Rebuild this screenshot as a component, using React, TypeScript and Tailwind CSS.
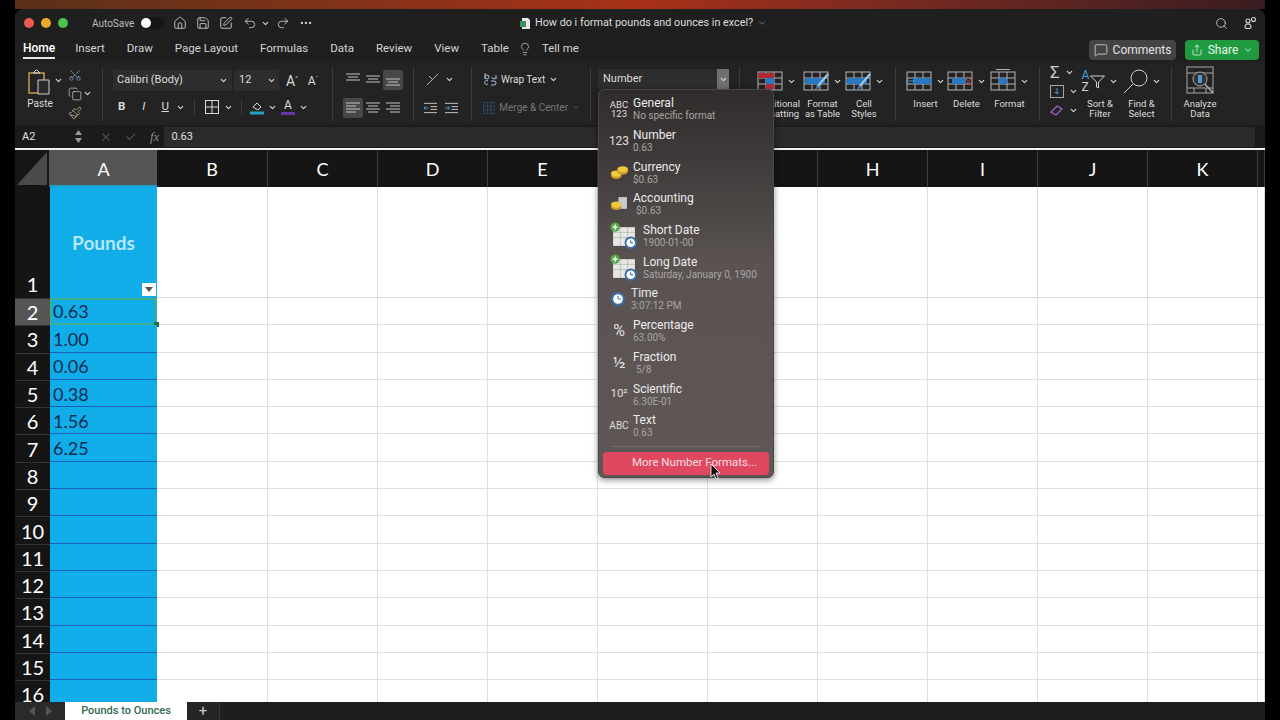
import type { ReactNode } from "react";
import { Home, Save, SquarePen, Undo2, Redo2, Ellipsis, Lightbulb, Search, Scissors, Copy, Paintbrush, ChevronDown, MessageSquare, Share, X, Check } from "lucide-react";

const ui = "font-['Roboto','Liberation_Sans',sans-serif]";
const sheet = "font-['Lato','Liberation_Sans',sans-serif]";

function Chev({ className = "" }: { className?: string }) {
  return <ChevronDown size={9} strokeWidth={3} className={`shrink-0 text-[#d8d8d8] ${className}`} />;
}

function Sep() {
  return <div className="mx-[10px] h-[54px] w-px shrink-0 bg-[#3a3a3a]" />;
}

function Lines({ kind }: { kind: "top" | "mid" | "bot" | "left" | "center" | "right" }) {
  const rows: Record<string, [number, number][]> = {
    top: [[1, 14], [4, 10], [7, 14]],
    mid: [[3, 14], [6, 10], [9, 14]],
    bot: [[6, 14], [9, 10], [12, 14]],
    left: [[2, 14], [5, 10], [8, 14], [11, 10]],
    center: [[2, 14], [5, 10], [8, 14], [11, 10]],
    right: [[2, 14], [5, 10], [8, 14], [11, 10]],
  };
  return (
    <svg width="16" height="14" viewBox="0 0 16 14" stroke="#c4c4c4" strokeWidth="1">
      {rows[kind].map(([y, w]) => {
        const x = kind === "right" ? 15 - w : kind === "left" ? 1 : 8 - w / 2;
        return <line key={y} x1={x} x2={x + w} y1={y} y2={y} />;
      })}
    </svg>
  );
}

function TableIcon({ children }: { children?: ReactNode }) {
  return (
    <svg width="27" height="24" viewBox="0 0 27 24" fill="none" stroke="#b4b4b4" strokeWidth="1">
      <rect x="1" y="3" width="24" height="18" />
      <path d="M1 9h24M1 15h24M9 3v18M17 3v18" />
      {children}
    </svg>
  );
}

function RibbonButton({ icon, label, width }: { icon: ReactNode; label: ReactNode; width: string }) {
  return (
    <div className={`flex shrink-0 flex-col items-center ${width}`}>
      <div className="flex h-[30px] items-center gap-[3px]">
        {icon}
        <Chev />
      </div>
      <div className="mt-[3px] whitespace-nowrap text-center text-[9.5px] leading-[10px] text-[#dcdcdc]">{label}</div>
    </div>
  );
}

function TitleBar() {
  return (
    <div className="relative flex h-[28px] items-center rounded-t-[8px] bg-[#1f1f1f] pl-[9px] pr-[8px] text-[#d6d6d6]">
      <span className="h-[10px] w-[10px] rounded-full bg-[#ee5a52]" />
      <span className="ml-[7px] h-[10px] w-[10px] rounded-full bg-[#e9a92a]" />
      <span className="ml-[7px] h-[10px] w-[10px] rounded-full bg-[#4cc04a]" />
      <span className="ml-[24px] w-[43px] text-[10px] text-[#bcbcbc]">AutoSave</span>
      <span className="relative ml-[6px] h-[12px] w-[24px] rounded-full bg-[#161616]">
        <span className="absolute left-0 top-[1px] h-[10px] w-[10px] rounded-full bg-white" />
      </span>
      <Home size={14} strokeWidth={1.4} className="ml-[8px]" />
      <Save size={14} strokeWidth={1.4} className="ml-[9px]" />
      <SquarePen size={14} strokeWidth={1.5} className="ml-[9px]" />
      <Undo2 size={14} strokeWidth={1.4} className="ml-[10px]" />
      <Chev className="ml-[4px]" />
      <Redo2 size={14} strokeWidth={1.4} className="ml-[6px]" />
      <Ellipsis size={14} className="ml-[9px]" />
      <div className="absolute left-[504px] top-0 flex h-full items-center gap-[4px]">
        <svg width="12" height="13" viewBox="0 0 12 13">
          <path d="M3 1h6l2 2v9H3z" fill="#e8e8e8" />
          <rect x="1" y="4" width="6" height="6" fill="#3f8f63" />
        </svg>
        <span className="text-[10.8px] text-[#dedede]">How do i format pounds and ounces in excel?</span>
        <ChevronDown size={10} className="text-[#8a8a8a]" />
      </div>
      <Search size={13} strokeWidth={1.5} className="ml-auto mr-[15px]" />
      <svg width="14" height="14" viewBox="0 0 14 14" fill="none" stroke="#d6d6d6" strokeWidth="1.1">
        <circle cx="5" cy="5" r="2" />
        <circle cx="10.500" cy="3.500" r="2" />
        <path d="M2 11c0-2 1.500-3 3-3s3 1 3 3-6 2-6 0z" />
      </svg>
    </div>
  );
}

function Tabs() {
  const tabs = ["Insert", "Draw", "Page Layout", "Formulas", "Data", "Review", "View", "Table"];
  return (
    <div className="flex h-[25px] items-start bg-[#1f1f1f] pl-[8px] pr-[6px] text-[11.5px] text-[#d4d4d4]">
      <div className="mr-[20px] flex h-[22px] items-center border-b-2 border-[#e6e6e6] pt-[2px] text-[12px] font-medium text-white">Home</div>
      <div className="flex h-[22px] items-center gap-[22px] pt-[1px]">
        {tabs.map((t) => (
          <span key={t}>{t}</span>
        ))}
        <span className="flex items-center gap-[10px]">
          <Lightbulb size={14} strokeWidth={1.2} className="-ml-[13px]" />
          Tell me
        </span>
      </div>
      <div className="ml-auto mt-[3px] flex h-[20px] w-[87px] items-center justify-center gap-[5px] rounded-[4px] bg-[#444444] text-[12px] text-[#e2e2e2]">
        <MessageSquare size={14} strokeWidth={1.3} />
        Comments
      </div>
      <div className="ml-[9px] mt-[3px] flex h-[20px] w-[74px] items-center justify-center gap-[5px] rounded-[4px] bg-[#1f9a40] text-[12px] text-[#eaf7ec]">
        <Share size={12} strokeWidth={1.5} />
        Share
        <ChevronDown size={10} />
      </div>
    </div>
  );
}

function Ribbon() {
  return (
    <div className="flex h-[63px] items-center bg-[#232323] pl-[11px] text-[#dcdcdc]">
      {/* clipboard */}
      <div className="flex w-[66px] shrink-0 items-start">
        <div className="flex w-[30px] flex-col items-center">
          <svg width="26" height="28" viewBox="0 0 26 28" fill="none">
            <path d="M2 5h15v20H2z" stroke="#c89a4a" strokeWidth="1.5" />
            <path d="M6 5l3-3h1l3 3z" stroke="#cfcfcf" />
            <path d="M11 12h11v14H11z" fill="#2a2a2a" stroke="#d0d0d0" />
          </svg>
          <span className="mt-[2px] text-[10px] leading-[12px]">Paste</span>
        </div>
        <Chev className="mt-[8px]" />
        <div className="ml-[5px] flex flex-col items-start gap-[5px]">
          <Scissors size={14} strokeWidth={1.1} className="rotate-[-90deg] text-[#8ab2d8]" />
          <div className="flex items-center gap-[1px]">
            <Copy size={14} strokeWidth={1.1} />
            <Chev />
          </div>
          <Paintbrush size={14} strokeWidth={1.2} className="text-[#d9c9a0]" />
        </div>
      </div>
      <Sep />
      {/* font */}
      <div className="flex w-[209px] shrink-0 flex-col gap-[6px]">
        <div className="flex items-center">
          <div className="flex h-[21px] w-[119px] items-center justify-between bg-[#2d2d2d] pl-[4px] pr-[4px] text-[11px]">
            Calibri (Body)
            <Chev />
          </div>
          <div className="ml-[2px] flex h-[21px] w-[45px] items-center justify-between bg-[#2d2d2d] pl-[5px] pr-[3px] text-[11px]">
            12
            <Chev />
          </div>
          <span className="ml-[7px] text-[14px] leading-[14px]">A</span>
          <span className="-mt-[6px] text-[6px] leading-[6px]">^</span>
          <span className="ml-[10px] text-[12px] leading-[12px]">A</span>
          <span className="-mt-[6px] text-[6px] leading-[6px]">ˇ</span>
        </div>
        <div className="flex h-[20px] items-center pl-[5px] text-[11.5px]">
          <span className="font-bold">B</span>
          <span className="ml-[17px] italic">I</span>
          <span className="ml-[16px] underline">U</span>
          <Chev className="ml-[7px]" />
          <div className="ml-[9px] mr-[10px] h-[16px] w-px bg-[#3a3a3a]" />
          <svg width="14" height="14" viewBox="0 0 14 14" fill="none" stroke="#d8d8d8">
            <rect x="0.500" y="0.500" width="13" height="13" />
            <path d="M7 0v14M0 7h14" />
          </svg>
          <Chev className="ml-[5px]" />
          <div className="ml-[8px] mr-[8px] h-[16px] w-px bg-[#3a3a3a]" />
          <svg width="15" height="15" viewBox="0 0 15 15" fill="none">
            <path d="M3 7l4-4 4 4-3 3z" stroke="#d8d8d8" />
            <rect x="0" y="11.500" width="14" height="3" fill="#27a0c4" />
          </svg>
          <Chev className="ml-[3px]" />
          <span className="ml-[4px] flex h-[16px] w-[14px] flex-col items-center text-[12px] leading-[12px]">
            A
            <span className="mt-[1px] h-[3px] w-[14px] bg-[#6a35a8]" />
          </span>
          <Chev className="ml-[4px]" />
        </div>
      </div>
      <Sep />
      {/* alignment */}
      <div className="grid w-[60px] shrink-0 grid-cols-3 gap-y-[8px]">
        <div className="flex h-[20px] items-center justify-center"><Lines kind="top" /></div>
        <div className="flex h-[20px] items-center justify-center"><Lines kind="mid" /></div>
        <div className="flex h-[20px] items-center justify-center rounded-[2px] bg-[#474747]"><Lines kind="bot" /></div>
        <div className="flex h-[20px] items-center justify-center rounded-[2px] bg-[#474747]"><Lines kind="left" /></div>
        <div className="flex h-[20px] items-center justify-center"><Lines kind="center" /></div>
        <div className="flex h-[20px] items-center justify-center"><Lines kind="right" /></div>
      </div>
      <Sep />
      <div className="flex h-[48px] w-[37px] shrink-0 flex-col justify-between">
        <div className="flex h-[20px] items-center gap-[3px] pl-[1px]">
          <svg width="17" height="15" viewBox="0 0 17 15" fill="none" stroke="#9dbbd8">
            <path d="M2 13L13 2M4 4l4 4" />
          </svg>
          <Chev />
        </div>
        <div className="flex h-[20px] items-center gap-[8px]">
          <svg width="13" height="12" viewBox="0 0 14 12" fill="none" stroke="#cfcfcf">
            <path d="M0 1h14M7 4.500h7M7 7.500h7M0 11h14" />
            <path d="M5 6H0m2-2L0 6l2 2" stroke="#4b9ad6" />
          </svg>
          <svg width="13" height="12" viewBox="0 0 14 12" fill="none" stroke="#cfcfcf">
            <path d="M0 1h14M7 4.500h7M7 7.500h7M0 11h14" />
            <path d="M0 6h5M3 4l2 2-2 2" stroke="#4b9ad6" />
          </svg>
        </div>
      </div>
      <Sep />
      {/* wrap and merge */}
      <div className="flex h-[48px] w-[98px] shrink-0 flex-col justify-between whitespace-nowrap pl-[1px] text-[10px]">
        <div className="flex h-[20px] items-center gap-[4px]">
          <svg width="14" height="15" viewBox="0 0 14 15" fill="none" stroke="#a8c4de">
            <path d="M2 1v6M2 5a2 2 0 1 0 4 0 2 2 0 1 0-4 0M9 5a2 2 0 1 0 4 0M13 3v4M5 12a2 2 0 1 1 0-3M8 13h3a2 2 0 0 0 0-4H8" />
          </svg>
          Wrap Text
          <Chev />
        </div>
        <div className="flex h-[20px] items-center gap-[4px] text-[#777777]">
          <svg width="14" height="14" viewBox="0 0 14 14" fill="none" stroke="#2f4a66">
            <rect x="0.500" y="0.500" width="13" height="13" />
            <path d="M0 5h14M0 9h14M5 0v14M9 0v14" />
          </svg>
          Merge &amp; Center
          <ChevronDown size={9} />
        </div>
      </div>
      <Sep />
      {/* number */}
      <div className="-ml-[3px] w-[131px] shrink-0 self-start pt-[7px]">
        <div className="flex h-[20px] items-center justify-between bg-[#2d2d2d] pl-[5px] text-[11px]">
          Number
          <div className="flex h-[20px] w-[12px] items-center justify-center bg-[#707070]">
            <Chev />
          </div>
        </div>
      </div>
      <Sep />
      {/* styles */}
      <div className="flex w-[135px] shrink-0 self-start pt-[4px]">
        <RibbonButton
          width="w-[52px]"
          icon={
            <TableIcon>
              <rect x="9" y="4" width="8" height="5" fill="#b22a38" stroke="none" />
              <rect x="9" y="15" width="8" height="5" fill="#b22a38" stroke="none" />
              <rect x="1" y="4" width="8" height="5" fill="#b22a38" stroke="none" />
              <rect x="9" y="9" width="8" height="6" fill="#2878c4" stroke="none" />
            </TableIcon>
          }
          label={<>Conditional<br />Formatting</>}
        />
        <RibbonButton
          width="w-[41px]"
          icon={
            <TableIcon>
              <rect x="2" y="9" width="20" height="6" fill="#2878c4" stroke="none" />
              <path d="M25 5L14 18" stroke="#9cc8ea" strokeWidth="2" />
              <path d="M15 16l-4 5 5-2z" fill="#2878c4" stroke="none" />
            </TableIcon>
          }
          label={<>Format<br />as Table</>}
        />
        <RibbonButton
          width="w-[42px]"
          icon={
            <TableIcon>
              <rect x="2" y="9" width="20" height="6" fill="#2878c4" stroke="none" />
              <path d="M25 5L14 18" stroke="#9cc8ea" strokeWidth="2" />
              <path d="M15 16l-4 5 5-2z" fill="#2878c4" stroke="none" />
            </TableIcon>
          }
          label={<>Cell<br />Styles</>}
        />
      </div>
      <Sep />
      {/* cells */}
      <div className="flex w-[123px] shrink-0 items-start self-start pt-[4px]">
        <RibbonButton
          width="w-[39px]"
          icon={
            <TableIcon>
              <rect x="7" y="9" width="18" height="6" fill="#2878c4" stroke="none" />
              <path d="M8 12H0m3-3l-3 3 3 3" stroke="#4b9ad6" />
            </TableIcon>
          }
          label="Insert"
        />
        <RibbonButton
          width="w-[43px]"
          icon={
            <TableIcon>
              <rect x="5" y="9" width="14" height="6" fill="#2878c4" stroke="none" />
              <path d="M17 8l9 9m0-9l-9 9" stroke="#c8403c" />
            </TableIcon>
          }
          label="Delete"
        />
        <RibbonButton
          width="w-[43px]"
          icon={
            <TableIcon>
              <rect x="9" y="9" width="8" height="6" fill="#2878c4" stroke="none" />
              <path d="M6 0.500h14" />
            </TableIcon>
          }
          label="Format"
        />
      </div>
      <Sep />
      {/* editing */}
      <div className="flex w-[111px] shrink-0 items-start self-start pt-[3px]">
        <div className="flex w-[29px] shrink-0 flex-col gap-[6px] text-[#cfcfcf]">
          <div className="flex items-center gap-[5px] text-[17px] leading-[14px]">Σ<Chev /></div>
          <div className="flex items-center gap-[5px]">
            <svg width="14" height="13" viewBox="0 0 14 13" fill="none" stroke="#9aa9b8">
              <rect x="0.500" y="0.500" width="13" height="12" />
              <path d="M7 3v6M5 7l2 2 2-2" stroke="#4b9ad6" />
            </svg>
            <Chev />
          </div>
          <div className="flex items-center gap-[5px]">
            <svg width="14" height="13" viewBox="0 0 14 13" fill="none" stroke="#a060c8" strokeWidth="1.3">
              <path d="M1 8l6-6 5 3-6 6z" />
            </svg>
            <Chev />
          </div>
        </div>
        <div className="pt-[1px]">
          <RibbonButton
            width="w-[42px]"
            icon={
              <span className="flex items-center">
                <span className="flex flex-col text-[12px] leading-[12px]">
                  <span className="text-[#4b9ad6]">A</span>
                  <span className="text-[#cfcfcf]">Z</span>
                </span>
                <svg width="17" height="15" viewBox="0 0 16 15" fill="none" stroke="#cfcfcf">
                  <path d="M1 2h14L9 8v6l-2-1V8z" />
                </svg>
              </span>
            }
            label={<>Sort &amp;<br />Filter</>}
          />
        </div>
        <div className="pt-[1px]">
          <RibbonButton
            width="w-[41px]"
            icon={
              <svg width="26" height="26" viewBox="0 0 26 26" fill="none" stroke="#cfcfcf">
                <circle cx="16" cy="10" r="8" />
                <path d="M10 16l-9 9" />
              </svg>
            }
            label={<>Find &amp;<br />Select</>}
          />
        </div>
      </div>
      <Sep />
      <div className="flex w-[36px] shrink-0 flex-col items-center self-start pt-[4px]">
        <svg width="29" height="30" viewBox="0 0 29 30" fill="none" stroke="#a8a8a8">
          <rect x="1" y="1" width="26" height="26" />
          <path d="M1 7h26M1 22h26M8 22v5M20 22v5" />
          <circle cx="14" cy="13" r="7" fill="#333333" />
          <rect x="12" y="9" width="4" height="8" fill="#4b9ad6" stroke="none" />
          <path d="M19 18l8 9" strokeWidth="1.500" />
        </svg>
        <div className="mt-[3px] whitespace-nowrap text-center text-[9.5px] leading-[10px]">Analyze<br />Data</div>
      </div>
    </div>
  );
}

function FormulaBar() {
  return (
    <div className="flex h-[25px] items-center border-b-[2px] border-[#f0f0f0] bg-[#1b1b1b] pl-[7px] pr-[10px] text-[11px] text-[#e0e0e0]">
      <span className="w-[48px] pt-[1px]">A2</span>
      <svg width="7" height="13" viewBox="0 0 7 13" fill="#9a9a9a" className="ml-[5px]">
        <path d="M3.500 0L7 5H0zM3.500 13L0 8h7z" />
      </svg>
      <X size={12} strokeWidth={2.4} className="ml-[18px] text-[#4c4c4c]" />
      <Check size={12} strokeWidth={2.4} className="ml-[13px] text-[#4c4c4c]" />
      <span className="ml-[13px] font-['Liberation_Serif',serif] text-[13px] italic text-[#8a8a8a]">fx</span>
      <div className="ml-[5px] flex h-[20px] flex-1 items-center bg-[#2a2a2a] pl-[7px] pt-[1px]">0.63</div>
    </div>
  );
}

// F and G sit behind the open menu, so their letters are never seen
const columns = ["B", "C", "D", "E", "", "", "H", "I", "J", "K", ""];
const values: Record<number, string> = { 2: "0.63", 3: "1.00", 4: "0.06", 5: "0.38", 6: "1.56", 7: "6.25" };
const rowNumbers = Array.from({ length: 15 }, (_, i) => i + 2);

function Sheet() {
  return (
    <div className={`min-h-0 flex-1 overflow-hidden bg-white ${sheet}`}>
      <div className="grid grid-cols-[35px_107px_111px_repeat(9,110px)_7px] grid-rows-[37px_111px_repeat(15,27.3px)]">
        <div className="flex items-end justify-end border-r border-[#555555] bg-[#161616] p-[2px]">
          <div className="h-[33px] w-[33px] bg-[#4a4a4a] [clip-path:polygon(100%_0,100%_100%,0_100%)]" />
        </div>
        <div className="flex items-center justify-center border-b-2 border-[#1ba0c8] bg-[#555555] pt-[3px] text-[18px] text-white">A</div>
        {columns.map((c, i) => (
          <div key={i} className="flex items-center justify-center border-r border-[#3c3c3c] bg-[#151515] pt-[2px] text-[18px] text-white">
            {c}
          </div>
        ))}

        <div className="flex items-end justify-center bg-[#151515] pb-[1px] text-[20px] leading-[26px] text-white">1</div>
        <div className="relative flex items-center justify-center bg-[#11ade8] pt-[1px] text-[19px] font-bold text-[#b6e6f8]">
          Pounds
          <div className="absolute bottom-[2px] right-[1px] flex h-[13px] w-[14px] items-center justify-center bg-white">
            <span className="h-0 w-0 border-x-[4px] border-t-[5px] border-x-transparent border-t-[#555555]" />
          </div>
        </div>
        {columns.map((c, i) => (
          <div key={i} className="border-b border-r border-[#dcdcdc]" />
        ))}

        {rowNumbers.map((n) => (
          <div key={n} className="contents">
            <div className={`flex items-center justify-center border-t border-[#333333] text-[20px] text-white ${n === 2 ? "bg-[#555555]" : "bg-[#151515]"}`}>
              {n}
            </div>
            <div
              className={`relative flex items-center bg-[#11ade8] text-[18px] text-[#0c2c52] ${
                n === 2 ? "border-2 border-[#3fae8c] pl-[1px]" : "border-b border-[#1f5fb8] pl-[3px] pt-[2px]"
              }`}
            >
              {values[n]}
              {n === 2 && <span className="absolute -bottom-[4px] -right-[4px] h-[5px] w-[5px] bg-[#1d6f4b]" />}
            </div>
            {columns.map((c, i) => (
              <div key={i} className="border-b border-r border-[#e0e0e0]" />
            ))}
          </div>
        ))}
      </div>
    </div>
  );
}

function SheetTabs() {
  return (
    <div className={`flex h-[18px] shrink-0 items-stretch bg-[#1e1e1e] ${ui}`}>
      <div className="flex w-[50px] items-center justify-center gap-[11px] bg-[#2a2a2a]">
        <span className="h-0 w-0 border-y-[5px] border-r-[6px] border-y-transparent border-r-[#555555]" />
        <span className="h-0 w-0 border-y-[5px] border-l-[6px] border-y-transparent border-l-[#555555]" />
      </div>
      <div className="flex w-[122px] items-center justify-center bg-white text-[11px] font-medium text-[#2f6b4c]">Pounds to Ounces</div>
      <div className="flex w-[33px] items-center justify-center border-r border-[#333333] bg-[#252525] text-[15px] text-[#c8c8c8]">+</div>
    </div>
  );
}

type MenuItem = { name: string; sub: string; icon: ReactNode; indent?: string };

function Coins({ small }: { small?: boolean }) {
  return (
    <svg width="17" height="15" viewBox="0 0 16 14">
      {small && <rect x="7" y="1" width="8" height="11" fill="#c5ccd6" />}
      <ellipse cx="5" cy="10" rx="5" ry="3" fill="#c89a28" />
      <ellipse cx="5" cy="8" rx="5" ry="3" fill="#f0c83c" />
      {!small && <ellipse cx="11" cy="6" rx="5" ry="3" fill="#c89a28" />}
      {!small && <ellipse cx="11" cy="4" rx="5" ry="3" fill="#f0c83c" />}
    </svg>
  );
}

function DateIcon() {
  return (
    <svg width="28" height="27" viewBox="0 0 27 26">
      <rect x="3" y="5" width="21" height="18" fill="#e8e8e8" />
      <path d="M3 10h21M3 15h21M10 5v18M17 5v18" stroke="#a8b8a8" strokeWidth="0.700" />
      <circle cx="5" cy="5" r="4.500" fill="#5aa84c" />
      <path d="M2.500 5h5M5 2.500v5" stroke="#ffffff" strokeWidth="1.200" />
      <circle cx="20" cy="20" r="6" fill="#3a6ea8" />
      <circle cx="20" cy="20" r="4.200" fill="#ffffff" />
      <path d="M20 17.500V20h2.500" stroke="#3a6ea8" fill="none" />
    </svg>
  );
}

function Glyph({ children, className = "" }: { children: ReactNode; className?: string }) {
  return <span className={`text-center text-[#e0dedd] ${className}`}>{children}</span>;
}

const menuItems: MenuItem[] = [
  { name: "General", sub: "No specific format", icon: <Glyph className="text-[9.5px] leading-[9px]">ABC<br />123</Glyph> },
  { name: "Number", sub: "0.63", icon: <Glyph className="text-[12px]">123</Glyph> },
  { name: "Currency", sub: "$0.63", icon: <Coins /> },
  { name: "Accounting", sub: "$0.63", icon: <Coins small />, indent: "pl-[3px]" },
  { name: "Short Date", sub: "1900-01-00", icon: <DateIcon /> },
  { name: "Long Date", sub: "Saturday, January 0, 1900", icon: <DateIcon /> },
  {
    name: "Time",
    sub: "3:07:12 PM",
    icon: (
      <svg width="14" height="14" viewBox="0 0 14 14">
        <circle cx="7" cy="7" r="7" fill="#3a6ea8" />
        <circle cx="7" cy="7" r="4.800" fill="#ffffff" />
        <path d="M7 4v3h3" stroke="#3a6ea8" fill="none" />
      </svg>
    ),
  },
  { name: "Percentage", sub: "63.00%", icon: <Glyph className="text-[16px]">%</Glyph> },
  { name: "Fraction", sub: "5/8", icon: <Glyph className="text-[17px]">½</Glyph>, indent: "pl-[3px]" },
  { name: "Scientific", sub: "6.30E-01", icon: <Glyph className="text-[11.5px]">10²</Glyph> },
  { name: "Text", sub: "0.63", icon: <Glyph className="text-[10px]">ABC</Glyph> },
];

function NumberMenu() {
  return (
    <div className={`absolute left-[598px] top-[89px] h-[389px] w-[176px] rounded-[6px] border border-[#4a4645] bg-gradient-to-b from-[#2f2c2b] via-[#5a5352] via-[45%] to-[#5e5756] px-[4px] pt-[3px] shadow-[0_2px_6px_rgba(0,0,0,0.45)] ${ui}`}>
      {menuItems.map((m) => {
        const wide = m.name.endsWith("Date");
        return (
          <div key={m.name} className="flex h-[31.7px] items-center">
            <div className={`flex shrink-0 items-center justify-center pl-[2px] ${wide ? "w-[40px]" : m.name === "Time" ? "w-[28px]" : "w-[30px]"}`}>{m.icon}</div>
            <div className="min-w-0 whitespace-nowrap">
              <div className="text-[12px] leading-[15px] text-[#ececec]">{m.name}</div>
              <div className={`text-[10px] leading-[10px] text-[#a9a5a4] ${m.indent ?? ""}`}>{m.sub}</div>
            </div>
          </div>
        );
      })}
      <div className="mx-[8px] mt-[4px] h-px bg-[#716b6a]" />
      <div className="mt-[5px] flex h-[23px] items-center rounded-[4px] bg-[#e0485f] pl-[29px] text-[11.5px] text-[#f6dfe2]">More Number Formats...</div>
      <svg width="12" height="17" viewBox="0 0 12 17" className="absolute left-[111px] top-[373px]">
        <path d="M1 1v13l3-3 2 5 2-1-2-5h4z" fill="#111111" stroke="#ffffff" strokeWidth="0.800" />
      </svg>
    </div>
  );
}

export default function App() {
  return (
    <div className="relative h-[720px] w-[1280px] overflow-hidden bg-black">
      <div className="mx-[15px] flex h-[720px] w-[1250px] flex-col">
        <div className="h-[9px] shrink-0 bg-gradient-to-r from-[#5a3018] via-[#a83018] to-[#3a1c20]" />
        <div className={`shrink-0 ${ui}`}>
          <TitleBar />
          <Tabs />
          <Ribbon />
          <FormulaBar />
        </div>
        <Sheet />
        <SheetTabs />
      </div>
      <NumberMenu />
    </div>
  );
}
